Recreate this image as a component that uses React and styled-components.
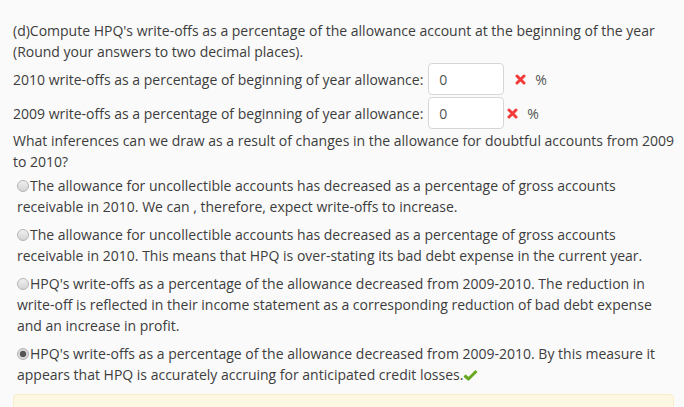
import React from "react";
import styled, { createGlobalStyle } from "styled-components";

const GlobalStyle = createGlobalStyle`
  body {
    margin: 0;
    background: #fafafa;
    font-family: "Open Sans", "Liberation Sans", sans-serif;
    color: #3d3d3d;
  }
`;

const Page = styled.section`
  width: 663px;
  padding: 20px 0 0 13px;
  font-size: 14px;
  line-height: 21px;
`;

const Para = styled.p`
  margin: 0;
`;

const AnswerRow = styled.div`
  display: flex;
  align-items: center;
  height: 34px;
`;

const AnswerInput = styled.div`
  box-sizing: border-box;
  width: 76px;
  height: 32px;
  margin-left: 5px;
  padding-left: 10px;
  display: flex;
  align-items: center;
  background: #fff;
  border: 1px solid #d6d6d6;
  border-radius: 4px;
  color: #555;
`;

const WrongMark = styled.span`
  display: inline-flex;
  margin-left: ${(p) => p.offset}px;
  margin-right: 9px;
`;

const Unit = styled.span`
  color: #555;
`;

const Options = styled.div`
  padding-left: 4px;
  margin-top: 3px;
`;

const Option = styled.div`
  margin-bottom: 7px;
`;

const Radio = styled.span`
  display: inline-block;
  box-sizing: border-box;
  width: 12px;
  height: 12px;
  margin-right: 1px;
  border-radius: 50%;
  vertical-align: -1px;
  border: 1px solid #b4b4b4;
  background: ${(p) =>
    p.checked
      ? "radial-gradient(circle, #555 0 2.8px, #d8d8d8 3.6px)"
      : "linear-gradient(#f0f0f0, #d4d4d4)"};
`;

const Feedback = styled.div`
  width: 659px;
  height: 20px;
  margin-top: 9px;
  background: #fef8e3;
  border: 1px solid #f8eecb;
  border-radius: 4px;
`;

const Cross = () => (
  <svg width="11" height="11" viewBox="0 0 11 11">
    <path d="M2 2L9 9M9 2L2 9" stroke="#f23a3a" strokeWidth="3" strokeLinecap="round" />
  </svg>
);

const Check = () => (
  <svg width="15" height="12" viewBox="0 0 15 12" style={{ verticalAlign: -1 }}>
    <path d="M1.5 6.5L5.5 10L13.5 2" fill="none" stroke="#66a81e" strokeWidth="3" strokeLinejoin="round" />
  </svg>
);

const choices = [
  {
    text: "The allowance for uncollectible accounts has decreased as a percentage of gross accounts receivable in 2010. We can , therefore, expect write-offs to increase.",
  },
  {
    text: "The allowance for uncollectible accounts has decreased as a percentage of gross accounts receivable in 2010. This means that HPQ is over-stating its bad debt expense in the current year.",
  },
  {
    text: "HPQ's write-offs as a percentage of the allowance decreased from 2009-2010. The reduction in write-off is reflected in their income statement as a corresponding reduction of bad debt expense and an increase in profit.",
  },
  {
    text: "HPQ's write-offs as a percentage of the allowance decreased from 2009-2010. By this measure it appears that HPQ is accurately accruing for anticipated credit losses.",
    checked: true,
  },
];

const App = () => {
  return (
    <>
      <GlobalStyle />
      <Page>
        <Para>
          (d)Compute HPQ's write-offs as a percentage of the allowance account at the beginning of the year
          (Round your answers to two decimal places).
        </Para>
        <AnswerRow>
          2010 write-offs as a percentage of beginning of year allowance:
          <AnswerInput>0</AnswerInput>
          <WrongMark offset={11}>
            <Cross />
          </WrongMark>
          <Unit>%</Unit>
        </AnswerRow>
        <AnswerRow>
          2009 write-offs as a percentage of beginning of year allowance:
          <AnswerInput>0</AnswerInput>
          <WrongMark offset={3}>
            <Cross />
          </WrongMark>
          <Unit>%</Unit>
        </AnswerRow>
        <Para>
          What inferences can we draw as a result of changes in the allowance for doubtful accounts from 2009 to 2010?
        </Para>
        <Options>
          {choices.map((c, i) => (
            <Option key={i}>
              <Radio checked={c.checked} />
              {c.text}
              {c.checked && <Check />}
            </Option>
          ))}
        </Options>
        <Feedback />
      </Page>
    </>
  );
};

export default App;
